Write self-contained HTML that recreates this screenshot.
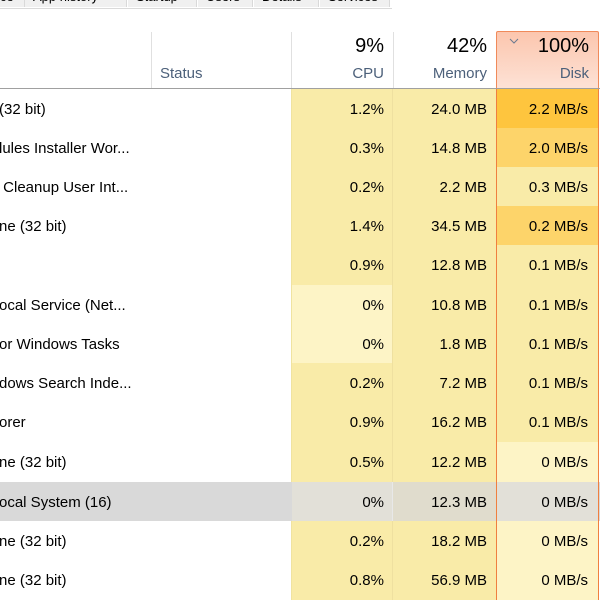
<!DOCTYPE html>
<html><head><style>
body{margin:0;width:600px;height:600px;overflow:hidden;background:#fff;font-family:"Liberation Sans",sans-serif;position:relative}
.abs{position:absolute}
.tab{position:absolute;top:-10px;height:17px;background:#f0f0f0;border-right:1px solid #d9d9d9;font-size:13px;color:#000;line-height:14px;overflow:hidden;white-space:nowrap}
.hl{position:absolute;top:8px;left:0;width:392px;height:1px;background:#dadada}
.hsep{position:absolute;top:32px;width:1px;height:56px;background:#e0e0e0}
.hdr{position:absolute;color:#4c607a;font-size:15px;text-align:right}
.big{position:absolute;color:#000;font-size:20px;text-align:right}
.row{position:absolute;left:0;width:600px;height:40px}
.name{position:absolute;left:-1px;top:1px;line-height:39px;font-size:15px;color:#000;white-space:nowrap}
.c{position:absolute;top:0;height:40px;line-height:42px;font-size:15px;color:#000;text-align:right;box-sizing:border-box}
.cpu{left:291px;width:101px;padding-right:8px;border-left:1px solid #f0e3a0}
.mem{left:392px;width:104px;padding-right:9px;border-left:1px solid #efe0a0}
.dsk{left:497px;width:101px;padding-right:10px}
</style></head><body>
<div class="tab" style="left:0;width:24px">ce</div>
<div class="tab" style="left:25px;width:102px;padding-left:8px;box-sizing:border-box">App history</div>
<div class="tab" style="left:128px;width:69px;padding-left:8px;box-sizing:border-box">Startup</div>
<div class="tab" style="left:198px;width:55px;padding-left:8px;box-sizing:border-box">Users</div>
<div class="tab" style="left:254px;width:65px;padding-left:8px;box-sizing:border-box">Details</div>
<div class="tab" style="left:320px;width:70px;padding-left:8px;box-sizing:border-box">Services</div>
<div class="hl"></div>

<div class="hsep" style="left:151px"></div>
<div class="hsep" style="left:291px"></div>
<div class="hsep" style="left:393px"></div>
<div class="abs" style="left:496px;top:31px;width:101px;height:57px;border:1px solid #f08a5a;border-bottom:none;border-radius:2px 2px 0 0;background:linear-gradient(#fcc6ae,#fde2d6)"></div>
<div class="abs" style="left:0;top:88px;width:600px;height:1px;background:#a0a0a0"></div>

<div class="hdr" style="left:160px;top:65px;text-align:left">Status</div>
<div class="big" style="left:291px;width:93px;top:35px">9%</div>
<div class="hdr" style="left:291px;width:93px;top:65px">CPU</div>
<div class="big" style="left:393px;width:94px;top:35px">42%</div>
<div class="hdr" style="left:393px;width:94px;top:65px">Memory</div>
<div class="big" style="left:497px;width:92px;top:35px">100%</div>
<div class="hdr" style="left:497px;width:92px;top:65px">Disk</div>
<svg class="abs" style="left:509px;top:38px" width="10" height="6"><path d="M1 1 L5 5 L9 1" fill="none" stroke="#6a7a90" stroke-width="1"/></svg>

<div class="row" style="top:89px"><div class="name">(32 bit)</div><div class="c cpu" style="background:#f9eba8">1.2%</div><div class="c mem" style="background:#f9eba8">24.0 MB</div><div class="c dsk" style="background:#fec53e">2.2 MB/s</div></div>
<div class="row" style="top:128px"><div class="name">lules Installer Wor...</div><div class="c cpu" style="background:#f9eba8">0.3%</div><div class="c mem" style="background:#f9eba8">14.8 MB</div><div class="c dsk" style="background:#fdd46a">2.0 MB/s</div></div>
<div class="row" style="top:167px"><div class="name">&nbsp;Cleanup User Int...</div><div class="c cpu" style="background:#f9eba8">0.2%</div><div class="c mem" style="background:#f9eba8">2.2 MB</div><div class="c dsk" style="background:#f9eba8">0.3 MB/s</div></div>
<div class="row" style="top:206px"><div class="name">ne (32 bit)</div><div class="c cpu" style="background:#f9eba8">1.4%</div><div class="c mem" style="background:#f9eba8">34.5 MB</div><div class="c dsk" style="background:#fdd46a">0.2 MB/s</div></div>
<div class="row" style="top:245px"><div class="name"></div><div class="c cpu" style="background:#f9eba8">0.9%</div><div class="c mem" style="background:#f9eba8">12.8 MB</div><div class="c dsk" style="background:#f9eba8">0.1 MB/s</div></div>
<div class="row" style="top:285px"><div class="name">ocal Service (Net...</div><div class="c cpu" style="background:#fdf4c6">0%</div><div class="c mem" style="background:#f9eba8">10.8 MB</div><div class="c dsk" style="background:#f9eba8">0.1 MB/s</div></div>
<div class="row" style="top:324px"><div class="name">or Windows Tasks</div><div class="c cpu" style="background:#fdf4c6">0%</div><div class="c mem" style="background:#f9eba8">1.8 MB</div><div class="c dsk" style="background:#f9eba8">0.1 MB/s</div></div>
<div class="row" style="top:363px"><div class="name">dows Search Inde...</div><div class="c cpu" style="background:#f9eba8">0.2%</div><div class="c mem" style="background:#f9eba8">7.2 MB</div><div class="c dsk" style="background:#f9eba8">0.1 MB/s</div></div>
<div class="row" style="top:402px"><div class="name">orer</div><div class="c cpu" style="background:#f9eba8">0.9%</div><div class="c mem" style="background:#f9eba8">16.2 MB</div><div class="c dsk" style="background:#f9eba8">0.1 MB/s</div></div>
<div class="row" style="top:442px"><div class="name">ne (32 bit)</div><div class="c cpu" style="background:#f9eba8">0.5%</div><div class="c mem" style="background:#f9eba8">12.2 MB</div><div class="c dsk" style="background:#fdf4c6">0 MB/s</div></div>
<div class="row" style="top:482px;height:39px;background:#d9d9d9"><div class="name">ocal System (16)</div><div class="c cpu" style="height:39px;background:#e2e0d8;border-left-color:#d9d9d9">0%</div><div class="c mem" style="height:39px;background:#e0dccd;border-left-color:#e8e8e8">12.3 MB</div><div class="c dsk" style="height:39px;background:#e2e0d8">0 MB/s</div></div>
<div class="row" style="top:521px"><div class="name">ne (32 bit)</div><div class="c cpu" style="background:#f9eba8">0.2%</div><div class="c mem" style="background:#f9eba8">18.2 MB</div><div class="c dsk" style="background:#fdf4c6">0 MB/s</div></div>
<div class="row" style="top:560px"><div class="name">ne (32 bit)</div><div class="c cpu" style="background:#f9eba8">0.8%</div><div class="c mem" style="background:#f9eba8">56.9 MB</div><div class="c dsk" style="background:#fdf4c6">0 MB/s</div></div>

<div class="abs" style="left:496px;top:89px;width:1px;height:511px;background:#f07f3f"></div>
<div class="abs" style="left:598px;top:89px;width:1px;height:511px;background:#f07f3f"></div>
</body></html>
